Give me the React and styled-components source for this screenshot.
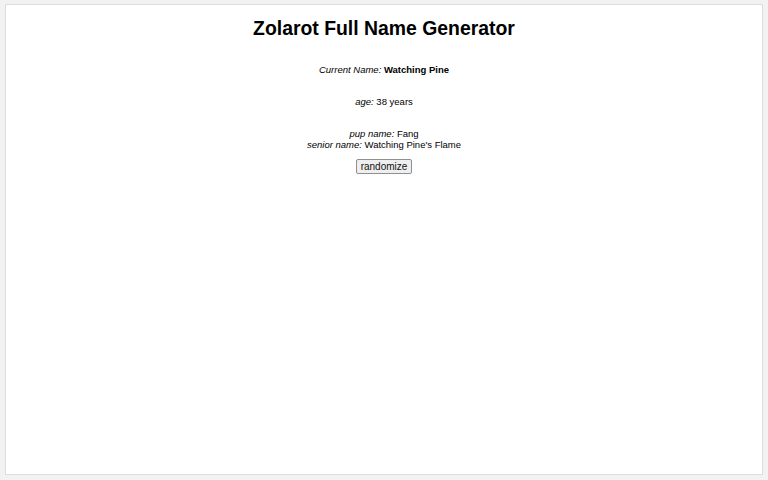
import React from "react";
import styled, { createGlobalStyle } from "styled-components";

const GlobalStyle = createGlobalStyle`
  body {
    margin: 0;
    background: #f2f2f2;
    font-family: "Liberation Sans", Arial, sans-serif;
  }
`;

const Page = styled.div`
  padding: 4px 5px 5px 5px;
`;

const Card = styled.div`
  box-sizing: border-box;
  height: 471px;
  background: white;
  border: 1px solid #dcdcdc;
  display: flex;
  flex-direction: column;
  align-items: center;
  padding-top: 12px;
  color: black;
`;

const Title = styled.h1`
  font-size: 19.4px;
  font-weight: bold;
  margin: 0 0 24px 0;
  line-height: 23px;
`;

const Block = styled.div`
  font-size: 9.5px;
  line-height: 11px;
  text-align: center;
  margin-bottom: ${(p) => p.gap || 21}px;
`;

const Label = styled.i``;

const Value = styled.span`
  font-weight: ${(p) => (p.bold ? "bold" : "normal")};
`;

const Button = styled.button`
  font-family: "Liberation Sans", Arial, sans-serif;
  font-size: 10px;
  padding: 1px 4px;
  background: #efefef;
  border: 1px solid #8f8f8f;
  border-radius: 2px;
  color: #111;
`;

const name = {
  current: "Watching Pine",
  age: 38,
  pup: "Fang",
  senior: "Watching Pine's Flame",
};

export default function App() {
  return (
    <>
      <GlobalStyle />
      <Page>
        <Card>
          <Title>Zolarot Full Name Generator</Title>
          <Block>
            <Label>Current Name:</Label> <Value bold>{name.current}</Value>
          </Block>
          <Block>
            <Label>age:</Label> <Value>{name.age} years</Value>
          </Block>
          <Block gap={9}>
            <div>
              <Label>pup name:</Label> <Value>{name.pup}</Value>
            </div>
            <div>
              <Label>senior name:</Label> <Value>{name.senior}</Value>
            </div>
          </Block>
          <Button>randomize</Button>
        </Card>
      </Page>
    </>
  );
}
